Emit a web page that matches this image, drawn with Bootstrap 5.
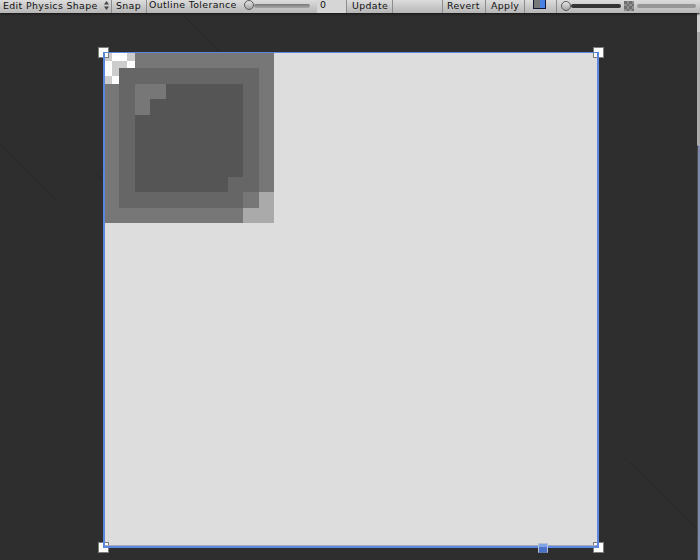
<!DOCTYPE html>
<html lang="en">
<head>
<meta charset="utf-8">
<title>Edit Physics Shape</title>
<link rel="stylesheet" href="https://cdn.jsdelivr.net/npm/bootstrap@5.3.0/dist/css/bootstrap.min.css">
<style>
html,body{height:100%;overflow:hidden}
body{background:#2e2e2e;font-family:"DejaVu Sans",sans-serif}
.ed-root{width:700px;height:560px}
.ed-bar{height:13px;flex:none;position:relative;z-index:2;background:linear-gradient(#dcdcdc,#b6b6b6);font-size:9.4px;line-height:12px;color:#111;white-space:nowrap;box-shadow:0 1px 2px #161616;letter-spacing:.36px}
.ed-cell{height:13px;border-right:1px solid #8c8c8c;overflow:hidden;flex:none}
.w-shape{width:112px;padding-left:3px}
.w-snap{width:35px;padding-left:4px}
.w-outline{width:170px;padding-left:2px;line-height:10px;border-right:0}
.w-field{width:30px;padding-left:3px;line-height:10px;background:#d6d6d6}
.w-update{width:46px;padding-left:5px}
.w-gap{width:50px}
.w-revert{width:43px;padding-left:4px}
.w-apply{width:39px;padding-left:5px}
.w-swatch{width:32px;padding-left:8px}
.w-tail{padding-left:4px;width:143px;height:11px}
.ed-arrows{width:5px;height:9px;margin-left:6px;vertical-align:-1px}
.ed-thumb{width:10px;height:10px;border-radius:50%;background:linear-gradient(#e4e4e4,#a4a4a4);border:1px solid #5a5a5a;flex:none;margin-left:7px}
.ed-track{height:4px;width:56px;flex:none;border-radius:2px;background:linear-gradient(#777,#a8a8a8)}
.ed-swatch{display:flex;width:13px;height:9px;border:1px solid #10183a;border-top:0}
.ed-swatch i{flex:1}
.ed-swatch i:first-child{background:#777}
.ed-swatch i:last-child{background:#4a80e4}
.ed-thumb2{margin-left:0}
.ed-track-dark{height:4px;width:50px;flex:none;border-radius:2px;background:#343434}
.ed-check{width:10px;height:10px;flex:none;margin:0 3px}
.ed-track-gray{height:4px;width:59px;flex:none;border-radius:2px;background:#979797}
.ed-canvas{position:relative;flex:1;min-height:0}
.ed-scratch{position:absolute;left:0;top:0;width:700px;height:547px}
.ed-sheet{position:absolute;left:104px;top:40px;width:494px;height:494px;background:#ddd}
.ed-art{position:absolute;left:104px;top:40px;width:495px;height:495px}
.ed-frame{position:absolute;left:103px;top:39px;width:496px;height:496px;border:2px solid #5c86e0;border-top-width:1px;box-shadow:inset 0 -1px 0 #a4aaba}
.ed-handle{position:absolute;width:11px;height:11px;background:#fff;border:1px solid #7c7c7c}
.h-left{left:98px}.h-right{left:593px}.h-top{top:34px}.h-bottom{top:529px}
.ed-blue{position:absolute;left:538px;top:530px;width:10px;height:10px;background:linear-gradient(#7fa3e6 40%,#4a72c8 40%);border:1px solid #b9c2d4;border-bottom-color:#5d76aa}
.ed-edge{width:3px;position:relative;display:flex;flex-direction:column}
.edge-a{height:19px;background:#cfcfcf}
.edge-b{height:113px;background:#acacac}
.edge-c{flex:1;background:#7d8cab;border-left:1px solid #4e4e4e;border-top:1px solid #9aa6c0}
</style>
</head>
<body>
<div class="ed-root d-flex flex-column">
<div class="ed-bar d-flex align-items-start">
<div class="ed-cell w-shape">Edit Physics Shape<svg class="ed-arrows" viewBox="0 0 5 9"><path d="M2.5 0L5 3.4H0zM2.5 9L0 5.6H5z" fill="#444"/></svg></div>
<div class="ed-cell w-snap">Snap</div>
<div class="ed-cell w-outline d-flex align-items-start"><span>Outline Tolerance</span><span class="ed-thumb"></span><span class="ed-track mt-1"></span></div>
<div class="ed-cell w-field">0</div>
<div class="ed-cell w-update">Update</div>
<div class="ed-cell w-gap"></div>
<div class="ed-cell w-revert">Revert</div>
<div class="ed-cell w-apply">Apply</div>
<div class="ed-cell w-swatch"><div class="ed-swatch"><i></i><i></i></div></div>
<div class="w-tail d-flex align-items-center">
<span class="ed-thumb ed-thumb2"></span><span class="ed-track-dark"></span>
<svg class="ed-check" viewBox="0 0 4 4" shape-rendering="crispEdges"><rect width="4" height="4" fill="#8e8e8e"/><path d="M0 0h1v1H0zM2 0h1v1H2zM1 1h1v1H1zM3 1h1v1H3zM0 2h1v1H0zM2 2h1v1H2zM1 3h1v1H1zM3 3h1v1H3z" fill="#6e6e6e"/></svg>
<span class="ed-track-gray"></span>
</div>
</div>
<div class="ed-canvas d-flex justify-content-end">
<svg class="ed-scratch" viewBox="0 0 700 547"><path d="M183 2L232 52M0 130L60 190M95 159L103 167M625 445L700 520" stroke="#272727" stroke-width="1" fill="none"/></svg>
<div class="ed-sheet"></div>
<svg class="ed-art" viewBox="0 0 32 32" shape-rendering="crispEdges">
<rect x="0" y="0" width="11" height="11" fill="#777"/>
<rect x="1" y="1" width="9" height="9" fill="#666"/>
<rect x="2" y="2" width="7" height="7" fill="#555"/>
<path d="M2 2h2v1H3v1H2z" fill="#777"/>
<rect x="8" y="8" width="1" height="1" fill="#666"/>
<rect x="9" y="9" width="1" height="1" fill="#777"/>
<path d="M10 9h1v2H9v-1h1z" fill="#aaa"/>
<rect x="0" y="0" width="2" height="1" fill="#ccc"/>
<rect x="0" y="1" width="1" height="1" fill="#ccc"/>
<path d="M.5 0h1v.5h-1zM0 .5h.5v1H0zM1.5 .5H2V1h-.5zM.5 1.5H1V2H.5z" fill="#fff"/>
</svg>
<div class="ed-handle h-left h-top"></div>
<div class="ed-handle h-right h-top"></div>
<div class="ed-handle h-left h-bottom"></div>
<div class="ed-handle h-right h-bottom"></div>
<div class="ed-frame"></div>
<div class="ed-blue"></div>
<div class="ed-edge"><div class="edge-a"></div><div class="edge-b"></div><div class="edge-c"></div></div>
</div>
</div>
<script src="https://cdn.jsdelivr.net/npm/bootstrap@5.3.0/dist/js/bootstrap.bundle.min.js"></script>
</body>
</html>
